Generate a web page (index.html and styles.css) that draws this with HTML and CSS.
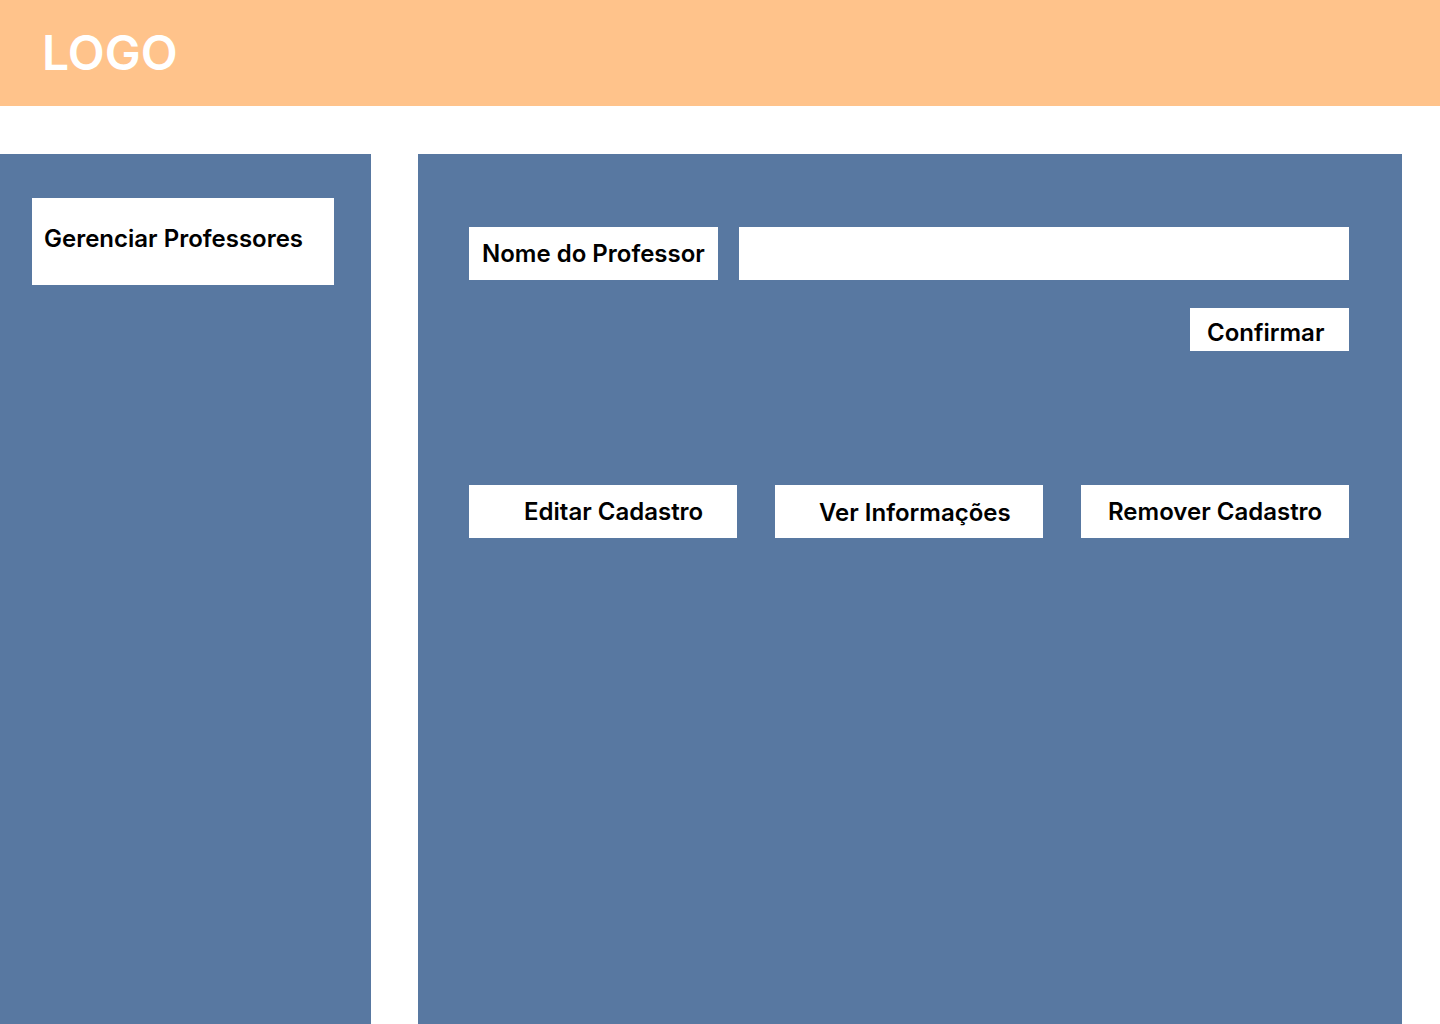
FILE: index.html
```html
<!DOCTYPE html>
<html lang="pt-BR">
<head>
<meta charset="utf-8">
<title>Gerenciar Professores</title>
<link rel="stylesheet" href="styles.css">
</head>
<body>
<header class="topbar">
  <div class="logo">LOGO</div>
</header>
<div class="content">
  <aside class="sidebar">
    <button class="side-btn">Gerenciar Professores</button>
  </aside>
  <main class="panel">
    <div class="field-row">
      <div class="field-label">Nome do Professor</div>
      <input class="field-input" type="text">
    </div>
    <div class="confirm-row">
      <button class="confirm-btn">Confirmar</button>
    </div>
    <div class="actions">
      <button class="action-btn action-edit">Editar Cadastro</button>
      <button class="action-btn action-view">Ver Informações</button>
      <button class="action-btn action-remove">Remover Cadastro</button>
    </div>
  </main>
</div>
</body>
</html>
```
FILE: styles.css
```css
* { box-sizing: border-box; }
html, body { margin: 0; padding: 0; }
body {
  width: 1440px;
  height: 1024px;
  overflow: hidden;
  background: #ffffff;
  font-family: Inter, "Noto Sans", "Liberation Sans", sans-serif;
  color: #000;
}
.topbar {
  height: 106px;
  background: #FFC38B;
  display: flex;
  align-items: center;
  padding-left: 42px;
}
.logo {
  color: #ffffff;
  font-size: 48px;
  font-weight: 600;
  line-height: 1;
}
.content {
  display: flex;
  margin-top: 48px;
  height: 870px;
}
.sidebar {
  width: 371px;
  background: #5878A1;
  padding: 44px 0 0 32px;
}
.panel {
  width: 984px;
  margin-left: 47px;
  background: #5878A1;
  padding: 73px 53px 0 51px;
  display: flex;
  flex-direction: column;
}
button {
  font-family: inherit;
  border: none;
  background: #fff;
  color: #000;
  margin: 0;
  cursor: pointer;
}
.side-btn {
  display: block;
  width: 302px;
  height: 87px;
  text-align: left;
  padding: 0 0 6px 12px;
  font-size: 24px;
  font-weight: 600;
}
.field-row {
  display: flex;
  gap: 21px;
  height: 53px;
}
.field-label {
  width: 249px;
  background: #fff;
  display: flex;
  align-items: center;
  padding-left: 13px;
  font-size: 24px;
  font-weight: 600;
  white-space: nowrap;
}
.field-input {
  flex: 1;
  border: none;
  background: #fff;
  margin: 0;
  padding: 0 12px;
  font-family: inherit;
  font-size: 22px;
}
.confirm-row {
  display: flex;
  justify-content: flex-end;
  margin-top: 28px;
}
.confirm-btn {
  width: 159px;
  height: 43px;
  text-align: left;
  padding: 5px 0 0 17px;
  font-size: 24px;
  font-weight: 600;
}
.actions {
  display: flex;
  gap: 38px;
  margin-top: 134px;
}
.action-btn {
  width: 268px;
  height: 53px;
  text-align: left;
  font-size: 24px;
  font-weight: 600;
  white-space: nowrap;
}
.action-edit { padding-left: 55px; }
.action-view { padding-left: 44px; padding-top: 3px; }
.action-remove { padding-left: 27px; }
```
